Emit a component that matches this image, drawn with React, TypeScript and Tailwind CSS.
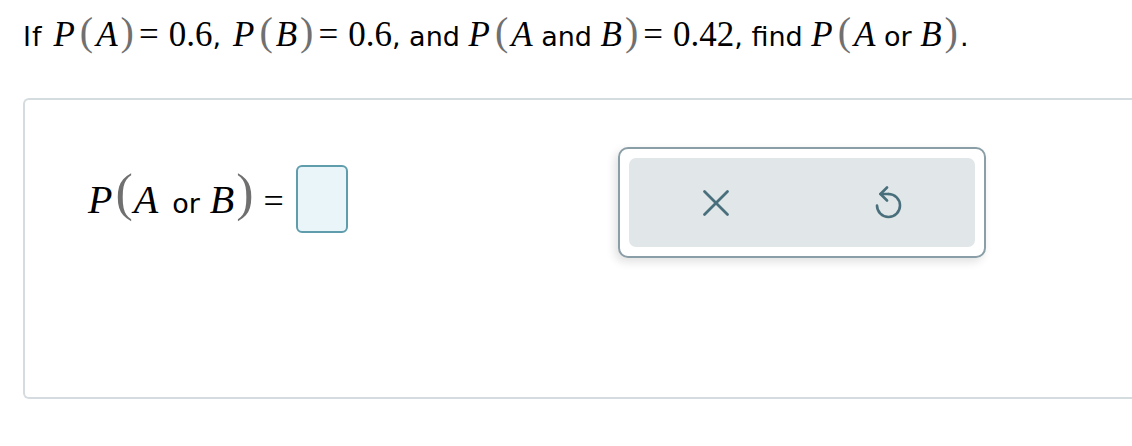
import React from "react";

const LP = () => (
  <span className="font-['Liberation_Serif',serif] text-[40px] leading-none text-[#707070] ml-[5px] mr-[3px] -translate-y-[1px] inline-block">(</span>
);
const RP = () => (
  <span className="font-['Liberation_Serif',serif] text-[40px] leading-none text-[#707070] ml-[3px] mr-[2px] -translate-y-[1px] inline-block">)</span>
);
const Eq = () => <span className="font-['Liberation_Serif',serif] ml-[3px] mr-[10px]">=</span>;
const I = ({ t }: { t: string }) => (
  <span className="font-['Liberation_Serif',serif] italic">{t}</span>
);
const N = ({ t }: { t: string }) => (
  <span className="font-['Liberation_Serif',serif]">{t}</span>
);

function UndoIcon() {
  return (
    <svg width="28" height="33" viewBox="1 2 28 33" fill="none" stroke="#4a6f7c" strokeWidth="2.6" strokeLinecap="round" strokeLinejoin="round">
      <path d="M14.5 10 H6.5" />
      <path d="M13 3.5 L6.5 10 L13 16.5" />
      <path d="M14.5 10 A11.5 11.5 0 1 1 3 21.5" />
    </svg>
  );
}

function XIcon() {
  return (
    <svg width="28" height="28" viewBox="0 0 28 28" fill="none" stroke="#4a6f7c" strokeWidth="2.8" strokeLinecap="round">
      <path d="M2.5 2.5 L25.5 25.5" />
      <path d="M25.5 2.5 L2.5 25.5" />
    </svg>
  );
}

export default function App() {
  return (
    <div className="w-[1132px] h-[446px] overflow-hidden bg-white text-black">
      <div className="h-[98px] pl-[23px] pt-[13px]">
        <div className="flex items-baseline whitespace-pre text-[27px] leading-[40px] font-['DejaVu_Sans',sans-serif]">
          <span className="tracking-[1px] mr-[11px]">If</span>
          <span className="text-[35px] flex items-baseline">
            <I t="P" /><LP /><I t="A" /><RP /><Eq /><N t="0.6" />
          </span>
          <span className="mr-[12px]">,</span>
          <span className="text-[35px] flex items-baseline">
            <I t="P" /><LP /><I t="B" /><RP /><Eq /><N t="0.6" />
          </span>
          <span>, and </span>
          <span className="text-[35px] flex items-baseline">
            <I t="P" /><LP /><I t="A" />
            <span className="font-['DejaVu_Sans',sans-serif] text-[27px]"> and </span>
            <I t="B" /><RP /><Eq /><N t="0.42" />
          </span>
          <span>, find </span>
          <span className="text-[35px] flex items-baseline">
            <I t="P" /><LP /><I t="A" />
            <span className="font-['DejaVu_Sans',sans-serif] text-[27px]"> or </span>
            <I t="B" /><RP />
          </span>
          <span>.</span>
        </div>
      </div>

      <div className="ml-[23px] w-[1130px] h-[301px] border-2 border-r-0 border-[#d5dcdf] rounded-l-[6px]">
        <div className="flex items-start pl-[63px] pt-[47px]">
          <div className="w-[530px] mt-[18px] flex items-center h-[68px]">
            <div className="flex items-baseline whitespace-pre text-[40px] leading-[50px]">
              <I t="P" />
              <span className="font-['Liberation_Serif',serif] text-[52px] leading-none text-[#707070] ml-[3px] mr-[1px] inline-block -translate-y-[3px]">(</span>
              <I t="A" />
              <span className="font-['DejaVu_Sans',sans-serif] text-[27px] ml-[14px] mr-[10px]">or</span>
              <I t="B" />
              <span className="font-['Liberation_Serif',serif] text-[52px] leading-none text-[#707070] ml-[2px] inline-block -translate-y-[3px]">)</span>
              <span className="font-['Liberation_Serif',serif] ml-[10px] mr-[12px] text-[36px]">=</span>
            </div>
            <div className="w-[52px] h-[68px] rounded-[6px] border-[2.5px] border-[#5f9dad] bg-[#eaf5fa]" />
          </div>

          <div className="w-[368px] h-[111px] rounded-[10px] border-2 border-[#8a9ea7] bg-white p-[9px] shadow-[-3px_4px_10px_rgba(0,0,0,0.12)]">
            <div className="flex h-full rounded-[7px] bg-[#e1e6e9]">
              <div className="flex-1 flex items-center justify-center">
                <XIcon />
              </div>
              <div className="flex-1 flex items-center justify-center">
                <UndoIcon />
              </div>
            </div>
          </div>
        </div>
      </div>
    </div>
  );
}
